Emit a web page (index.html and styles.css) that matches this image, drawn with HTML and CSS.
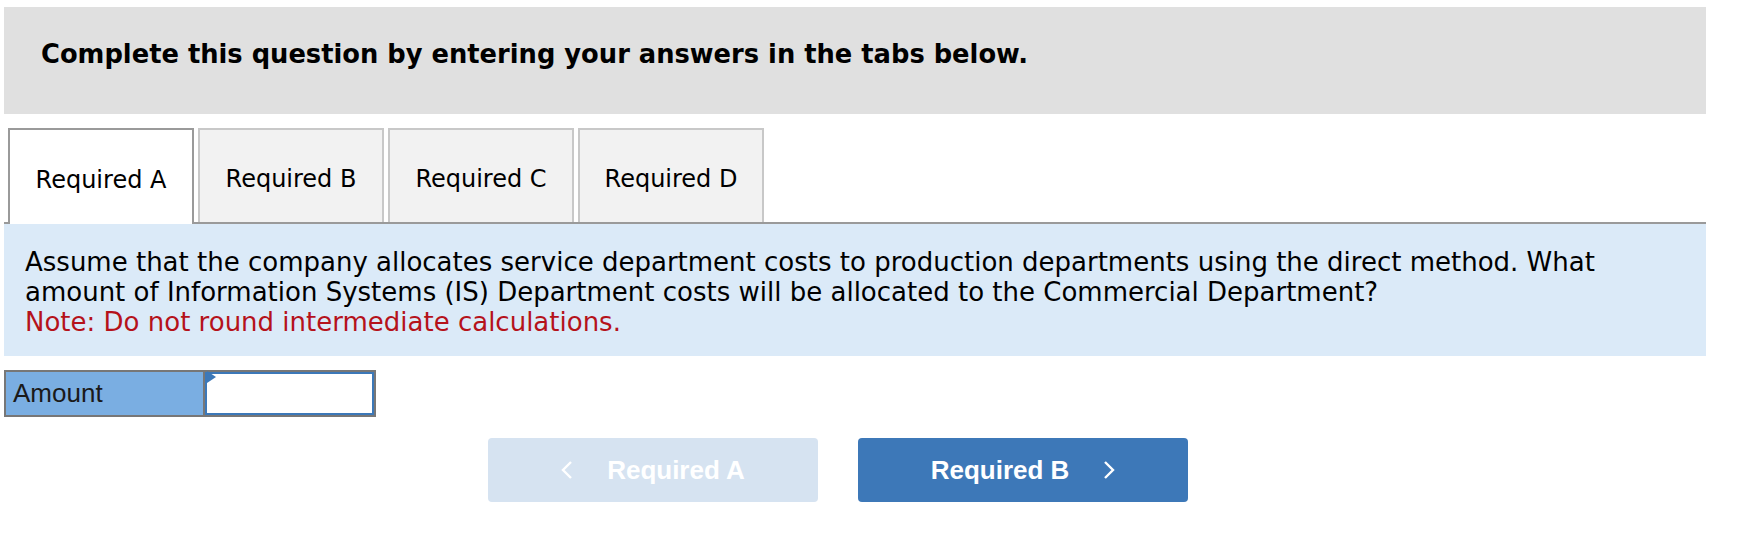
FILE: index.html
```html
<!DOCTYPE html>
<html>
<head>
<meta charset="utf-8">
<link rel="stylesheet" href="styles.css">
</head>
<body>
<div class="page">
  <div class="banner">Complete this question by entering your answers in the tabs below.</div>
  <div class="tabs">
    <div class="tab active">Required A</div>
    <div class="tab">Required B</div>
    <div class="tab">Required C</div>
    <div class="tab">Required D</div>
  </div>
  <div class="question">
    <p>Assume that the company allocates service department costs to production departments using the direct method. What amount of Information Systems (IS) Department costs will be allocated to the Commercial Department?</p>
    <p class="note">Note: Do not round intermediate calculations.</p>
  </div>
  <div class="answer">
    <div class="label">Amount</div>
    <div class="input"><span class="flag"></span></div>
  </div>
  <div class="nav">
    <div class="btn prev"><svg class="chev" viewBox="0 0 12 20" width="12" height="20"><polyline points="10,2 2,10 10,18" fill="none" stroke="#fff" stroke-width="2.4"/></svg><span>Required A</span></div>
    <div class="btn next"><span>Required B</span><svg class="chev" viewBox="0 0 12 20" width="12" height="20"><polyline points="2,2 10,10 2,18" fill="none" stroke="#fff" stroke-width="2.4"/></svg></div>
  </div>
</div>
</body>
</html>
```
FILE: styles.css
```css
html, body {
  margin: 0;
  padding: 0;
  background: #fff;
}
.page {
  width: 1702px;
  padding: 7px 0 0 4px;
  font-family: "DejaVu Sans", Verdana, sans-serif;
  color: #000;
}
.banner {
  background: #e0e0e0;
  height: 107px;
  box-sizing: border-box;
  padding: 32px 0 0 37px;
  font-weight: bold;
  font-size: 25.75px;
  line-height: 30px;
}
.tabs {
  display: flex;
  gap: 4px;
  padding-left: 4px;
  margin-top: 14px;
  border-bottom: 2px solid #9a9a9a;
  height: 94px;
}
.tab {
  width: 186px;
  height: 94px;
  box-sizing: border-box;
  border: 2px solid #c8c8c8;
  border-bottom: none;
  background: #f2f2f2;
  display: flex;
  align-items: center;
  justify-content: center;
  padding-top: 5px;
  font-size: 24px;
}
.tab.active {
  background: #fff;
  border-color: #9a9a9a;
  height: 96px;
  position: relative;
  z-index: 1;
}
.question {
  background: #dbeaf8;
  padding: 23px 18px 19px 21px;
  font-size: 26px;
  line-height: 30px;
}
.question p {
  margin: 0;
}
.note {
  color: #b5121b;
}
.answer {
  display: flex;
  margin-top: 14px;
  width: 372px;
  height: 47px;
  box-sizing: border-box;
  border: 2px solid #777;
}
.label {
  width: 199px;
  background: #7aaee2;
  border-right: 2px solid #777;
  font-family: "Liberation Sans", Arial, sans-serif;
  font-size: 26px;
  color: #1a1a1a;
  display: flex;
  align-items: center;
  padding-left: 7px;
  box-sizing: border-box;
}
.input {
  flex: 1;
  background: #fff;
  border: 2px solid #3c78b8;
  position: relative;
}
.flag {
  position: absolute;
  left: 0;
  top: -3px;
  width: 0;
  height: 0;
  border-top: 6px solid transparent;
  border-bottom: 6px solid transparent;
  border-left: 9px solid #3c78b8;
}
.nav {
  display: flex;
  gap: 40px;
  margin: 21px 0 0 484px;
}
.btn {
  width: 330px;
  height: 64px;
  border-radius: 4px;
  display: flex;
  align-items: center;
  justify-content: center;
  gap: 34px;
  font-family: "Liberation Sans", Arial, sans-serif;
  font-weight: bold;
  font-size: 26px;
  color: #fff;
}
.btn .chev {
  display: block;
}
.prev {
  background: #d6e3f1;
}
.next {
  background: #3d78b8;
}
```
